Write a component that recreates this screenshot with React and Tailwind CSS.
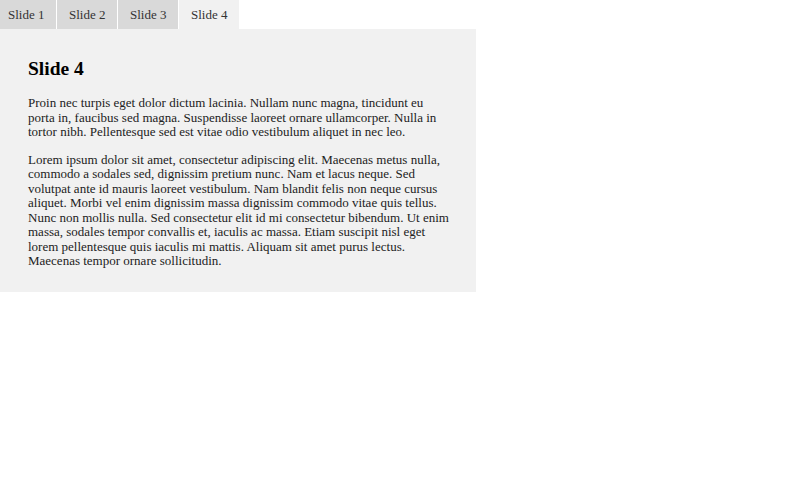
import React from "react";

export default function App() {
  const tabs = ["Slide 1", "Slide 2", "Slide 3", "Slide 4"];
  return (
    <div className="bg-white w-[800px] h-[480px] text-[#222]" style={{ fontFamily: '"Liberation Serif", "Times New Roman", serif' }}>
      <div className="flex h-[29px] gap-[1px]">
        {tabs.map((t, i) => (
          <div
            key={t}
            className={
              "h-[29px] flex items-center text-[13px] text-[#333] " +
              (i === 0 ? "w-[56px] pl-[8px] " : "w-[60px] pl-[12px] ") +
              (i === 3 ? "bg-[#f1f1f1]" : "bg-[#d9d9d9]")
            }
          >
            {t}
          </div>
        ))}
      </div>
      <div className="w-[476px] bg-[#f1f1f1] pt-[29px] pl-[28px] pr-[24px] pb-[23px]">
        <h2 className="text-[19.5px] font-bold leading-[22px] text-black mb-[16px]">Slide 4</h2>
        <p className="text-[13px] leading-[14.5px] mb-[13px]">
          Proin nec turpis eget dolor dictum lacinia. Nullam nunc magna, tincidunt eu porta in, faucibus sed magna. Suspendisse laoreet ornare ullamcorper. Nulla in tortor nibh. Pellentesque sed est vitae odio vestibulum aliquet in nec leo.
        </p>
        <p className="text-[13px] leading-[14.5px]">
          Lorem ipsum dolor sit amet, consectetur adipiscing elit. Maecenas metus nulla, commodo a sodales sed, dignissim pretium nunc. Nam et lacus neque. Sed volutpat ante id mauris laoreet vestibulum. Nam blandit felis non neque cursus aliquet. Morbi vel enim dignissim massa dignissim commodo vitae quis tellus. Nunc non mollis nulla. Sed consectetur elit id mi consectetur bibendum. Ut enim massa, sodales tempor convallis et, iaculis ac massa. Etiam suscipit nisl eget lorem pellentesque quis iaculis mi mattis. Aliquam sit amet purus lectus. Maecenas tempor ornare sollicitudin.
        </p>
      </div>
    </div>
  );
}
